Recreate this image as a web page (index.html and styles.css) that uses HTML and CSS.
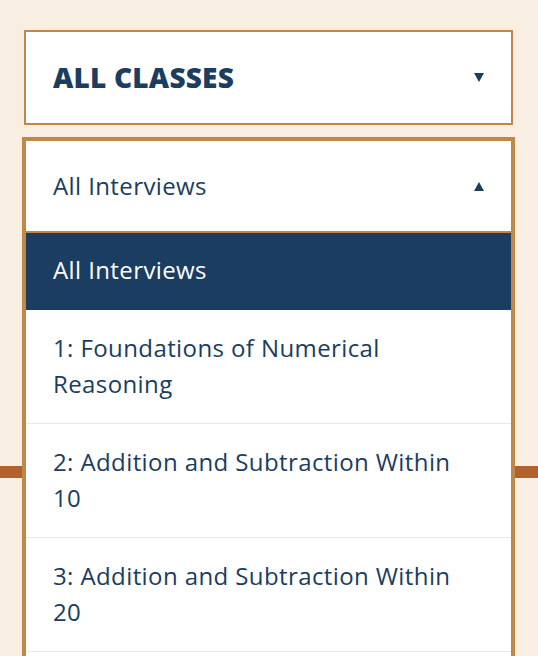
FILE: index.html
```html
<!DOCTYPE html>
<html lang="en">
<head>
<meta charset="utf-8">
<title>Interviews</title>
<link rel="stylesheet" href="styles.css">
</head>
<body>
<div class="page">
  <div class="select select-classes">
    <span>All Classes</span>
    <svg class="caret" width="10" height="9" viewBox="0 0 10 9"><polygon points="0,0 10,0 5,9"/></svg>
  </div>
  <div class="filter">
    <div class="select filter-head">
      <span>All Interviews</span>
      <svg class="caret" width="10" height="9" viewBox="0 0 10 9"><polygon points="5,0 10,9 0,9"/></svg>
    </div>
    <ul class="filter-list">
      <li class="item active">All Interviews</li>
      <li class="item">1: Foundations of Numerical Reasoning</li>
      <li class="item">2: Addition and Subtraction Within 10</li>
      <li class="item">3: Addition and Subtraction Within 20</li>
      <li class="item">4: Place Value</li>
    </ul>
  </div>
  <div class="divider"></div>
</div>
</body>
</html>
```
FILE: styles.css
```css
html, body {
  margin: 0;
  padding: 0;
}
body {
  background: #f8efe2;
  font-family: "Open Sans", "DejaVu Sans", sans-serif;
  color: #1a3d61;
  overflow: hidden;
  height: 656px;
}
.page {
  padding: 30px 25px 0 24px;
}
.select {
  display: flex;
  justify-content: space-between;
  align-items: center;
  background: #ffffff;
  border: 2px solid #c08848;
}
.caret {
  fill: #1a3d61;
  flex: none;
}
.select-classes {
  padding: 24px 27px 25px 27px;
  font-weight: 800;
  font-size: 28px;
  line-height: 42px;
  letter-spacing: 0.2px;
  text-transform: uppercase;
}
.filter {
  position: relative;
  margin-top: 14px;
  outline: 2px solid #c08848;
}
.filter-head {
  padding: 27px 27px;
  font-size: 24px;
  line-height: 36px;
  letter-spacing: 0.4px;
}
.filter-list {
  position: absolute;
  top: 100%;
  left: -2px;
  right: -2px;
  margin: 0;
  padding: 0;
  list-style: none;
  border-left: 4px solid #c08848;
  border-right: 4px solid #c08848;
  background: #ffffff;
  z-index: 2;
}
.item {
  padding: 20px 45px 21px 27px;
  font-size: 24px;
  line-height: 36px;
  letter-spacing: 0.4px;
  border-bottom: 1px solid #e8e8e8;
  background: #ffffff;
}
.item.active {
  background: #1a3d61;
  color: #ffffff;
  border-bottom: none;
  padding-top: 19px;
  padding-bottom: 22px;
}
.divider {
  margin-top: 233px;
  margin-left: -24px;
  margin-right: -25px;
  height: 12px;
  background: #b0612d;
}
```
